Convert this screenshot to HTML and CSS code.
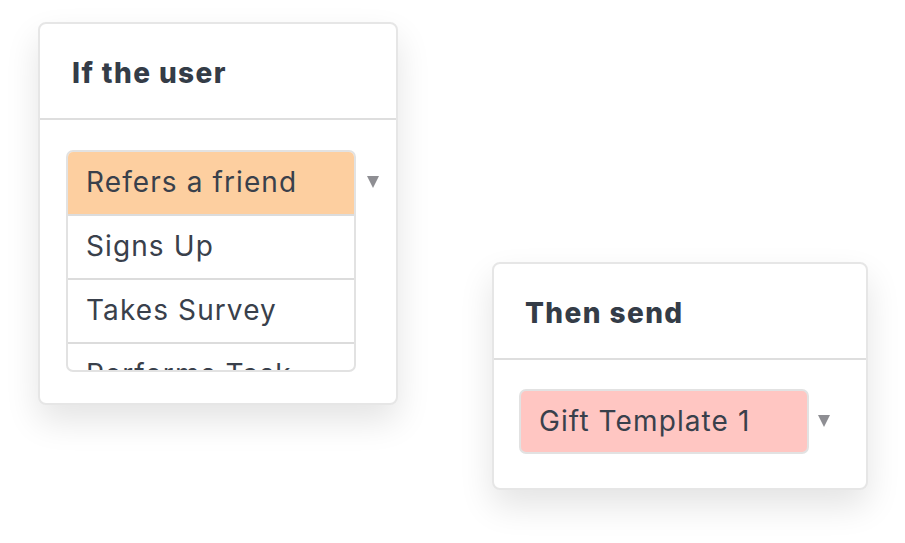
FILE: index.html
```html
<!DOCTYPE html>
<html lang="en">

<head>
    <meta charset="UTF-8">
    <meta name="viewport" content="width=device-width, initial-scale=1.0">
    <title>Rule</title>
    <link rel="stylesheet" href="styles.css">
</head>

<body>
    <div class="canvas">
        <div class="card card-if">
            <div class="card-head">If the user</div>
            <div class="card-body">
                <div class="picker">
                    <div class="options">
                        <div class="option selected">Refers a friend</div>
                        <div class="option">Signs Up</div>
                        <div class="option">Takes Survey</div>
                        <div class="option">Performs Task</div>
                    </div>
                    <div class="caret"></div>
                </div>
            </div>
        </div>
        <div class="card card-then">
            <div class="card-head">Then send</div>
            <div class="card-body">
                <div class="picker">
                    <div class="single">Gift Template 1</div>
                    <div class="caret"></div>
                </div>
            </div>
        </div>
    </div>
</body>

</html>
```
FILE: styles.css
```css
body {
    margin: 0;
    background: #fff;
    font-family: "Inter", "Liberation Sans", sans-serif;
    color: #39404b;
}

.canvas {
    display: flex;
    align-items: flex-start;
    padding-left: 38px;
    gap: 94px;
    height: 543px;
    box-sizing: border-box;
}

.card {
    background: #fff;
    border: 2px solid #e6e6e6;
    border-radius: 8px;
    box-shadow: 0 16px 34px rgba(0, 0, 0, 0.11);
}

.card-if {
    width: 356px;
    margin-top: 22px;
}

.card-then {
    width: 372px;
    margin-top: 262px;
}

.card-head {
    height: 94px;
    line-height: 98px;
    font-size: 28px;
    font-weight: 800;
    letter-spacing: 1.4px;
    color: #343c47;
    border-bottom: 2px solid #dedede;
}

.card-if .card-head {
    padding-left: 32px;
}

.card-then .card-head {
    padding-left: 31px;
}

.card-body {
    padding: 30px 0 31px 26px;
}

.card-then .card-body {
    padding: 29px 0 34px 25px;
}

.picker {
    display: flex;
    align-items: flex-start;
}

.options {
    width: 286px;
    height: 218px;
    overflow: hidden;
    border: 2px solid #e2e2e2;
    border-radius: 7px;
}

.option {
    height: 62px;
    line-height: 60px;
    padding-left: 18px;
    font-size: 28px;
    letter-spacing: 1.1px;
    border-bottom: 2px solid #dcdcdc;
}

.option.selected {
    background: #fdcfa0;
}

.single {
    width: 268px;
    height: 61px;
    line-height: 60px;
    padding-left: 18px;
    font-size: 28px;
    letter-spacing: 1.1px;
    background: #ffc6c2;
    border: 2px solid #e2e2e2;
    border-radius: 7px;
}

.caret {
    width: 0;
    height: 0;
    margin: 26px 0 0 11px;
    border-left: 6px solid transparent;
    border-right: 6px solid transparent;
    border-top: 12px solid #8e8e93;
}

.card-then .caret {
    margin-left: 9px;
}
```
